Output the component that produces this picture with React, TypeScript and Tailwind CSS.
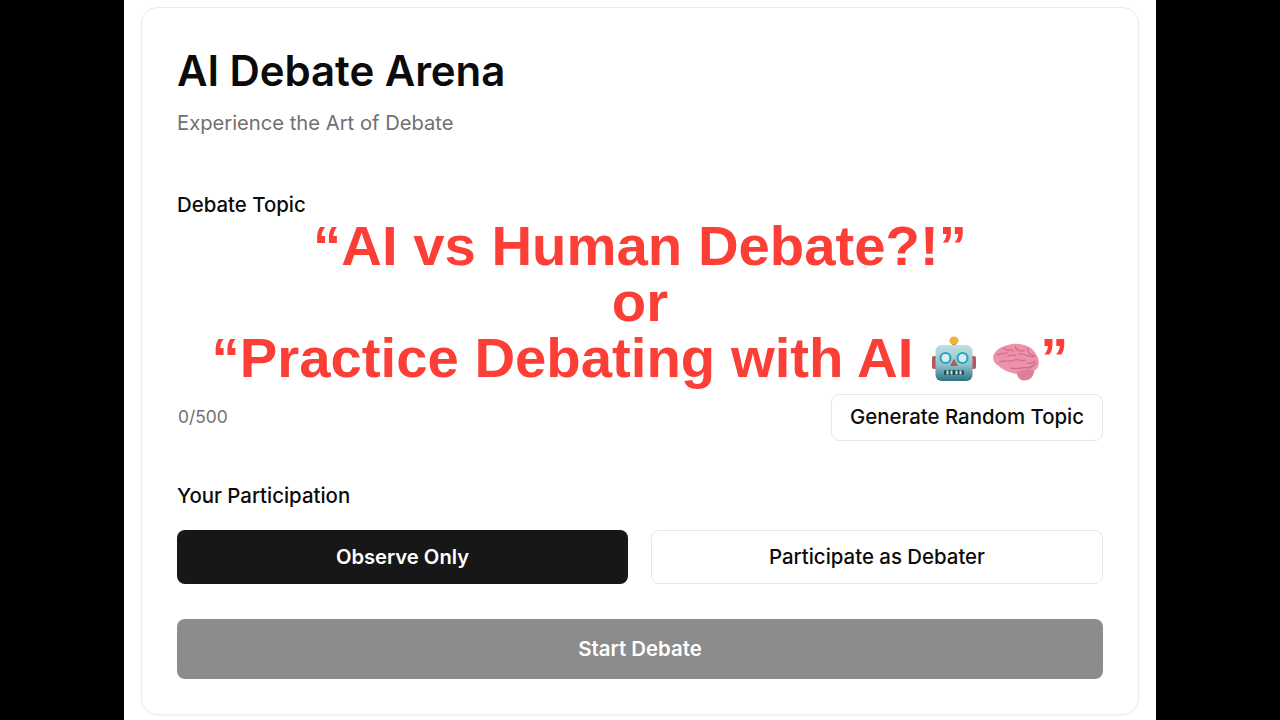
function RobotEmoji() {
  return (
    <svg viewBox="0 0 44 46" className="w-[44px] h-[46px] shrink-0">
      <defs>
        <linearGradient id="robotFace" x1="0" y1="0" x2="0" y2="1">
          <stop offset="0" stopColor="#bfe0e5" />
          <stop offset="0.55" stopColor="#8fc4cd" />
          <stop offset="1" stopColor="#2c7282" />
        </linearGradient>
      </defs>
      <rect x="20" y="4" width="4" height="6" fill="#8f8a72" />
      <ellipse cx="22" cy="4.6" rx="4.6" ry="4" fill="#efb23c" />
      <rect x="0" y="20" width="6" height="13" rx="2" fill="#b4565b" />
      <rect x="38" y="20" width="6" height="13" rx="2" fill="#b4565b" />
      <rect x="3.5" y="9" width="37" height="36" rx="6" fill="url(#robotFace)" />
      <circle cx="13.5" cy="22" r="5" fill="#d8eef2" stroke="#2aa6bd" strokeWidth="2.2" />
      <circle cx="30.5" cy="22" r="5" fill="#d8eef2" stroke="#2aa6bd" strokeWidth="2.2" />
      <path d="M22 22.5 L26 30 L18 30 Z" fill="#b5595d" />
      <rect x="12" y="34" width="20" height="5" rx="1.5" fill="#1e4e59" />
      <path d="M15.5 34.5v4M19.5 34.5v4M24.5 34.5v4M28.5 34.5v4" stroke="#d2e7ea" strokeWidth="2" />
    </svg>
  )
}

function BrainEmoji() {
  return (
    <svg viewBox="0 0 48 38" className="w-[47px] h-[38px] shrink-0">
      <path
        d="M0 14C1 7 9 2 20 .5C30-.5 40 3 44 11C48 17 48 25 42 28C38 30 30 32 24 31C17 30 10 27 6 23C2 21 0 18 0 14Z"
        fill="#ec92ab"
      />
      <path d="M24 30C28 27 38 26 42 28C42 33 38 38 32 38C28 38 25 35 24 30Z" fill="#dc7f99" />
      <path
        d="M4 12C8 9 12 12 15 9M11 5C14 8 19 6 21 8M23 3C23 7 28 9 32 7M36 5C35 10 38 12 43 13M7 19C12 16 17 20 22 17C26 15 28 19 33 17M26 11C30 9 35 13 41 14M15 13C18 11 21 13 23 12M18 25C23 27 29 24 35 25C38 25 41 23 44 20M35 20C38 21 41 20 43 18"
        fill="none"
        stroke="#cf6a88"
        strokeWidth="1.2"
        strokeLinecap="round"
      />
    </svg>
  )
}

export default function App() {
  return (
    <div className="h-[720px] w-[1280px] overflow-hidden bg-black flex justify-center font-['Inter',sans-serif]">
      <div className="w-[1032px] h-full bg-white px-[17px] pt-[7px]">
        <div className="h-[708px] rounded-[17px] border border-[#ececec] shadow-[0_1px_3px_rgba(0,0,0,0.05)] px-[35px]">
          <h1 className="mt-[37px] text-[42px] leading-[52px] font-semibold tracking-[-0.08px] text-[#0b0b0b]">AI Debate Arena</h1>
          <p className="mt-[13px] text-[20.2px] leading-[26px] text-[#707070]">Experience the Art of Debate</p>

          <div className="mt-[56px] text-[20.4px] leading-[26px] font-medium text-[#0b0b0b]">Debate Topic</div>

          {/* Topic field, covered by the red title */}
          <div className="relative h-[176px]">
            <div className="absolute inset-x-0 top-[0px] text-center whitespace-nowrap font-['Liberation_Sans',Arial,sans-serif] font-bold text-[56.3px] leading-[56px] text-[#fb3e36]">
              <div>“AI vs Human Debate?!”</div>
              <div>or</div>
              <div className="flex justify-center items-center">
                <span>“Practice Debating with AI</span>
                <span className="ml-[19px] mt-[2px]"><RobotEmoji /></span>
                <span className="ml-[17px] mt-[7px]"><BrainEmoji /></span>
                <span>”</span>
              </div>
            </div>
          </div>

          <div className="flex items-center justify-between">
            <span className="text-[17.4px] text-[#707070] pl-[1px]">0/500</span>
            <button className="h-[47px] w-[272px] rounded-[8px] border border-[#e8e8e8] bg-white text-[20.4px] font-medium text-[#0b0b0b]">
              Generate Random Topic
            </button>
          </div>

          <div className="mt-[42px] text-[20.4px] leading-[26px] font-medium text-[#0b0b0b]">Your Participation</div>

          <div className="mt-[21px] grid grid-cols-[451px_1fr] gap-[23px]">
            <button className="h-[54px] rounded-[8px] bg-[#171717] text-[20.2px] font-semibold text-white">Observe Only</button>
            <button className="h-[54px] rounded-[8px] border border-[#e8e8e8] bg-white text-[20.4px] font-medium text-[#0b0b0b]">
              Participate as Debater
            </button>
          </div>

          <button className="mt-[35px] h-[60px] w-full rounded-[8px] bg-[#8c8c8c] text-[20.4px] font-semibold text-white">
            Start Debate
          </button>
        </div>
      </div>
    </div>
  )
}
